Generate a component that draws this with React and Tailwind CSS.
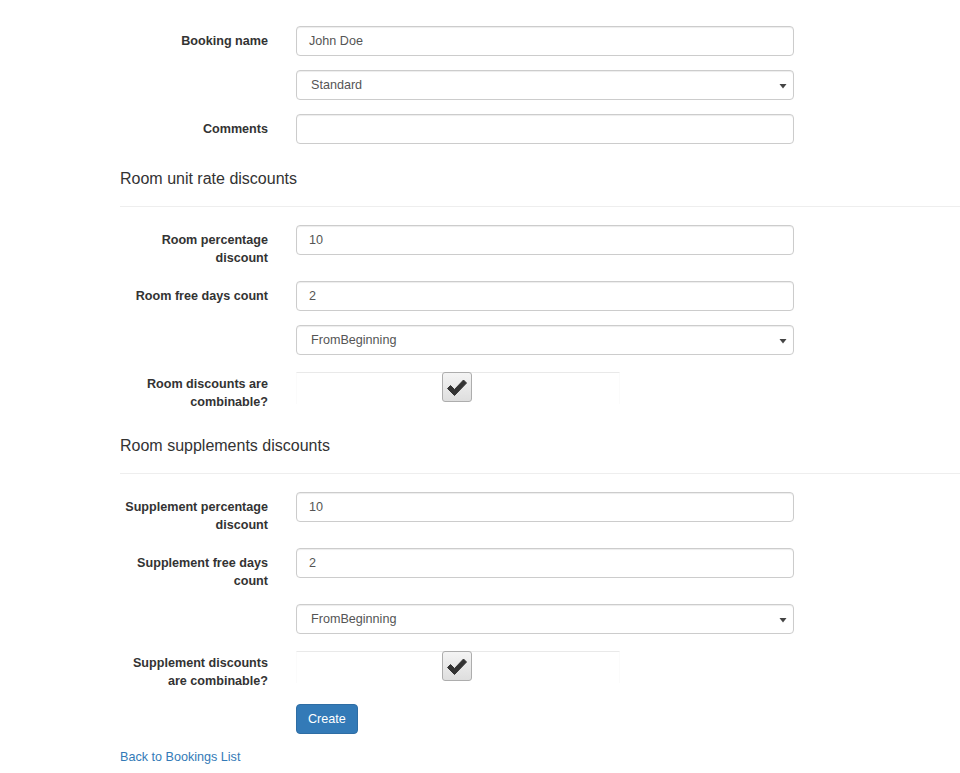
import React from "react";

function Label({ children }) {
  return (
    <label className="w-[148px] shrink-0 text-right font-bold pt-[6px] mr-[28px] leading-[18px]">
      {children}
    </label>
  );
}

function Row({ label, children }) {
  return (
    <div className="flex mb-[14px]">
      <Label>{label}</Label>
      <div className="w-[498px]">{children}</div>
    </div>
  );
}

function TextBox({ value }) {
  return (
    <div className="h-[30px] w-full border border-[#ccc] rounded-[4px] px-[12px] flex items-center text-[#555] bg-white shadow-[inset_0_1px_1px_rgba(0,0,0,0.075)]">
      {value}
    </div>
  );
}

function SelectBox({ value }) {
  return (
    <div className="h-[30px] w-full border border-[#ccc] rounded-[4px] pl-[14px] pr-[6px] flex items-center justify-between text-[#555] bg-white shadow-[inset_0_1px_1px_rgba(0,0,0,0.075)]">
      <span>{value}</span>
      <svg width="8" height="6" viewBox="0 0 8 6" className="mt-[1px]">
        <polygon points="0.5,1 7.5,1 4,5.5" fill="#444" />
      </svg>
    </div>
  );
}

function CheckRow({ label }) {
  return (
    <div className="flex mb-[14px]">
      <Label>{label}</Label>
      <div className="w-[324px] h-[32px] mt-[3px] border-t border-[#e9e9e9] border-x border-x-[#fbfbfb]">
        <div className="ml-[145px] -mt-px w-[30px] h-[30px] rounded-[3px] border border-[#adadad] bg-gradient-to-b from-[#f4f4f4] to-[#dedede] flex items-center justify-center">
          <svg width="22" height="19" viewBox="0 0 22 19">
            <path
              d="M1.5 10.5 L4.5 7.5 L8.5 11.5 L17.5 2 L20.5 5 L8.5 17.5 Z"
              fill="#333"
              stroke="#333"
              strokeWidth="1"
              strokeLinejoin="round"
            />
          </svg>
        </div>
      </div>
    </div>
  );
}

function Heading({ children }) {
  return (
    <div>
      <div className="pt-[10px] text-[16px] leading-[22px] text-[#333]">{children}</div>
      <div className="mt-[16px] mb-[18px] border-t border-[#eee]" />
    </div>
  );
}

export default function App() {
  return (
    <div className="min-h-[773px] bg-white pl-[120px] pt-[26px] font-['Liberation_Sans',Arial,sans-serif] text-[12.6px] leading-[18px] text-[#333]">
      <Row label="Booking name">
        <TextBox value="John Doe" />
      </Row>
      <Row label="">
        <SelectBox value="Standard" />
      </Row>
      <Row label="Comments">
        <TextBox value="" />
      </Row>

      <Heading>Room unit rate discounts</Heading>

      <Row label={<>Room percentage<br />discount</>}>
        <TextBox value="10" />
      </Row>
      <Row label="Room free days count">
        <TextBox value="2" />
      </Row>
      <Row label="">
        <SelectBox value="FromBeginning" />
      </Row>
      <CheckRow label={<>Room discounts are<br />combinable?</>} />

      <Heading>Room supplements discounts</Heading>

      <Row label={<>Supplement percentage<br />discount</>}>
        <TextBox value="10" />
      </Row>
      <Row label={<>Supplement free days<br />count</>}>
        <TextBox value="2" />
      </Row>
      <Row label="">
        <SelectBox value="FromBeginning" />
      </Row>
      <CheckRow label={<>Supplement discounts<br />are combinable?</>} />

      <div className="flex mb-[14px]">
        <div className="w-[148px] mr-[28px] shrink-0" />
        <button className="h-[30px] px-[11px] rounded-[4px] bg-[#337ab7] border border-[#2e6da4] text-white leading-[18px]">
          Create
        </button>
      </div>

      <div>
        <a className="text-[#337ab7] cursor-pointer">Back to Bookings List</a>
      </div>
    </div>
  );
}
